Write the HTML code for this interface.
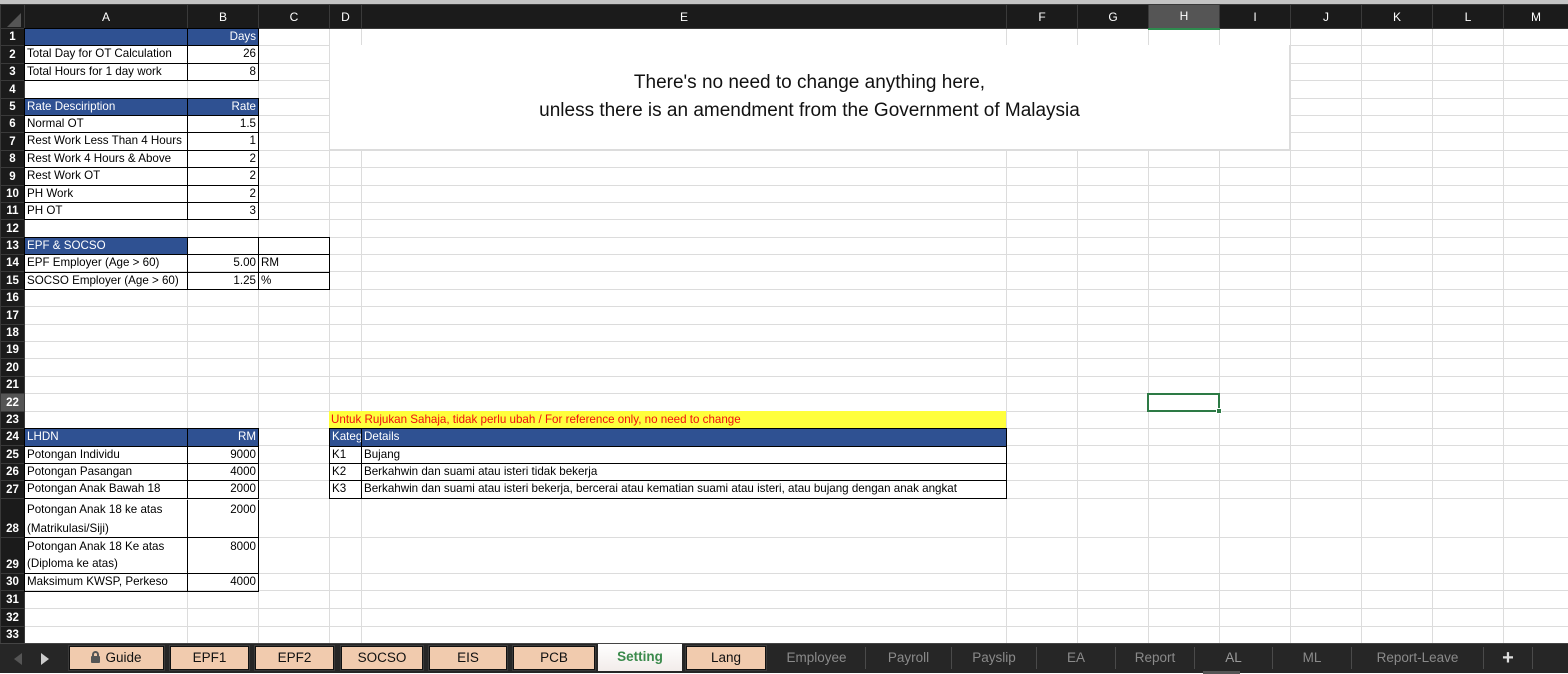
<!DOCTYPE html>
<html><head><meta charset="utf-8">
<style>
*{box-sizing:border-box;margin:0;padding:0}
body{width:1568px;height:673px;overflow:hidden;background:#fff;font-family:"Liberation Sans",Arial,sans-serif;position:relative}
#top{position:absolute;left:0;top:0;width:1568px;height:4px;background:#c4c4c4}
table.g{position:absolute;left:0;top:4px;border-collapse:collapse;table-layout:fixed;width:1568px}
table.g td{border:1px solid #dcdcdc;padding:0;font-size:12px}
table.g tr.hd td{background:#1b1b1b;color:#fff;text-align:center;border-color:#3a3a3a;height:24px;font-size:12px}
table.g td.rh{background:#1b1b1b;color:#fff;font-weight:bold;text-align:center;border-color:#3a3a3a;vertical-align:bottom;font-size:11.5px;line-height:15px}
table.g tr{height:17.4px}
.blk{position:absolute;border-left:1px solid #000;border-top:1px solid #000;font-size:11.6px;color:#000}
.r{display:flex;border-bottom:1px solid #000;height:17.4px;line-height:16px}
.r>span{border-right:1px solid #000;padding:0 2px;white-space:nowrap;overflow:hidden;flex:none}
.h{background:#2f5192;color:#fff}
.n{text-align:right}
.a{width:163px}.b{width:71px}.c{width:71px}
</style></head><body>
<div id="top"></div>
<table class="g">
<colgroup><col style="width:24px"><col style="width:163px"><col style="width:71px"><col style="width:71px"><col style="width:32px"><col style="width:645px"><col style="width:71px"><col style="width:71px"><col style="width:71px"><col style="width:71px"><col style="width:71px"><col style="width:71px"><col style="width:71px"><col style="width:65px"></colgroup>
<tr class="hd"><td style="background:#1b1b1b"><div style="width:0;height:0;border-left:14px solid transparent;border-bottom:14px solid #555;margin:6px 0 0 6px"></div></td><td>A</td><td>B</td><td>C</td><td>D</td><td>E</td><td>F</td><td>G</td><td style="background:#555;border-bottom:2px solid #2e8b4e">H</td><td>I</td><td>J</td><td>K</td><td>L</td><td>M</td></tr>
<tr><td class="rh">1</td><td></td><td></td><td></td><td></td><td></td><td></td><td></td><td></td><td></td><td></td><td></td><td></td><td></td></tr>
<tr><td class="rh">2</td><td></td><td></td><td></td><td></td><td></td><td></td><td></td><td></td><td></td><td></td><td></td><td></td><td></td></tr>
<tr><td class="rh">3</td><td></td><td></td><td></td><td></td><td></td><td></td><td></td><td></td><td></td><td></td><td></td><td></td><td></td></tr>
<tr><td class="rh">4</td><td></td><td></td><td></td><td></td><td></td><td></td><td></td><td></td><td></td><td></td><td></td><td></td><td></td></tr>
<tr><td class="rh">5</td><td></td><td></td><td></td><td></td><td></td><td></td><td></td><td></td><td></td><td></td><td></td><td></td><td></td></tr>
<tr><td class="rh">6</td><td></td><td></td><td></td><td></td><td></td><td></td><td></td><td></td><td></td><td></td><td></td><td></td><td></td></tr>
<tr><td class="rh">7</td><td></td><td></td><td></td><td></td><td></td><td></td><td></td><td></td><td></td><td></td><td></td><td></td><td></td></tr>
<tr><td class="rh">8</td><td></td><td></td><td></td><td></td><td></td><td></td><td></td><td></td><td></td><td></td><td></td><td></td><td></td></tr>
<tr><td class="rh">9</td><td></td><td></td><td></td><td></td><td></td><td></td><td></td><td></td><td></td><td></td><td></td><td></td><td></td></tr>
<tr><td class="rh">10</td><td></td><td></td><td></td><td></td><td></td><td></td><td></td><td></td><td></td><td></td><td></td><td></td><td></td></tr>
<tr><td class="rh">11</td><td></td><td></td><td></td><td></td><td></td><td></td><td></td><td></td><td></td><td></td><td></td><td></td><td></td></tr>
<tr><td class="rh">12</td><td></td><td></td><td></td><td></td><td></td><td></td><td></td><td></td><td></td><td></td><td></td><td></td><td></td></tr>
<tr><td class="rh">13</td><td></td><td></td><td></td><td></td><td></td><td></td><td></td><td></td><td></td><td></td><td></td><td></td><td></td></tr>
<tr><td class="rh">14</td><td></td><td></td><td></td><td></td><td></td><td></td><td></td><td></td><td></td><td></td><td></td><td></td><td></td></tr>
<tr><td class="rh">15</td><td></td><td></td><td></td><td></td><td></td><td></td><td></td><td></td><td></td><td></td><td></td><td></td><td></td></tr>
<tr><td class="rh">16</td><td></td><td></td><td></td><td></td><td></td><td></td><td></td><td></td><td></td><td></td><td></td><td></td><td></td></tr>
<tr><td class="rh">17</td><td></td><td></td><td></td><td></td><td></td><td></td><td></td><td></td><td></td><td></td><td></td><td></td><td></td></tr>
<tr><td class="rh">18</td><td></td><td></td><td></td><td></td><td></td><td></td><td></td><td></td><td></td><td></td><td></td><td></td><td></td></tr>
<tr><td class="rh">19</td><td></td><td></td><td></td><td></td><td></td><td></td><td></td><td></td><td></td><td></td><td></td><td></td><td></td></tr>
<tr><td class="rh">20</td><td></td><td></td><td></td><td></td><td></td><td></td><td></td><td></td><td></td><td></td><td></td><td></td><td></td></tr>
<tr><td class="rh">21</td><td></td><td></td><td></td><td></td><td></td><td></td><td></td><td></td><td></td><td></td><td></td><td></td><td></td></tr>
<tr><td class="rh" style="background:#555">22</td><td></td><td></td><td></td><td></td><td></td><td></td><td></td><td></td><td></td><td></td><td></td><td></td><td></td></tr>
<tr><td class="rh">23</td><td></td><td></td><td></td><td></td><td></td><td></td><td></td><td></td><td></td><td></td><td></td><td></td><td></td></tr>
<tr><td class="rh">24</td><td></td><td></td><td></td><td></td><td></td><td></td><td></td><td></td><td></td><td></td><td></td><td></td><td></td></tr>
<tr><td class="rh">25</td><td></td><td></td><td></td><td></td><td></td><td></td><td></td><td></td><td></td><td></td><td></td><td></td><td></td></tr>
<tr><td class="rh">26</td><td></td><td></td><td></td><td></td><td></td><td></td><td></td><td></td><td></td><td></td><td></td><td></td><td></td></tr>
<tr><td class="rh">27</td><td></td><td></td><td></td><td></td><td></td><td></td><td></td><td></td><td></td><td></td><td></td><td></td><td></td></tr>
<tr style="height:39.2px"><td class="rh">28</td><td></td><td></td><td></td><td></td><td></td><td></td><td></td><td></td><td></td><td></td><td></td><td></td><td></td></tr>
<tr style="height:36px"><td class="rh">29</td><td></td><td></td><td></td><td></td><td></td><td></td><td></td><td></td><td></td><td></td><td></td><td></td><td></td></tr>
<tr style="height:17.6px"><td class="rh">30</td><td></td><td></td><td></td><td></td><td></td><td></td><td></td><td></td><td></td><td></td><td></td><td></td><td></td></tr>
<tr style="height:17.6px"><td class="rh">31</td><td></td><td></td><td></td><td></td><td></td><td></td><td></td><td></td><td></td><td></td><td></td><td></td><td></td></tr>
<tr style="height:17.6px"><td class="rh">32</td><td></td><td></td><td></td><td></td><td></td><td></td><td></td><td></td><td></td><td></td><td></td><td></td><td></td></tr>
<tr style="height:17.6px"><td class="rh">33</td><td></td><td></td><td></td><td></td><td></td><td></td><td></td><td></td><td></td><td></td><td></td><td></td><td></td></tr>
</table>

<!-- merged notice box -->
<div style="position:absolute;left:330px;top:45px;width:960px;height:105px;background:#fff;text-align:center;font-size:19px;line-height:28px;color:#111;border-right:1px solid #dcdcdc;border-bottom:1px solid #dcdcdc">
<div style="position:absolute;left:0;top:24px;width:100%">There's no need to change anything here,<br>unless there is an amendment from the Government of Malaysia</div></div>

<div class="blk" style="left:24px;top:28px">
<div class="r h"><span class="a"></span><span class="b n">Days</span></div>
<div class="r"><span class="a">Total Day for OT Calculation</span><span class="b n">26</span></div>
<div class="r"><span class="a">Total Hours for 1 day work</span><span class="b n">8</span></div>
</div>

<div class="blk" style="left:24px;top:97.6px">
<div class="r h"><span class="a">Rate Desciription</span><span class="b n">Rate</span></div>
<div class="r"><span class="a">Normal OT</span><span class="b n">1.5</span></div>
<div class="r"><span class="a">Rest Work Less Than 4 Hours</span><span class="b n">1</span></div>
<div class="r"><span class="a">Rest Work 4 Hours &amp; Above</span><span class="b n">2</span></div>
<div class="r"><span class="a">Rest Work OT</span><span class="b n">2</span></div>
<div class="r"><span class="a">PH Work</span><span class="b n">2</span></div>
<div class="r"><span class="a">PH OT</span><span class="b n">3</span></div>
</div>

<div class="blk" style="left:24px;top:236.8px">
<div class="r"><span class="a h">EPF &amp; SOCSO</span><span class="b"></span><span class="c"></span></div>
<div class="r"><span class="a">EPF Employer (Age &gt; 60)</span><span class="b n">5.00</span><span class="c">RM</span></div>
<div class="r"><span class="a">SOCSO Employer (Age &gt; 60)</span><span class="b n">1.25</span><span class="c">%</span></div>
</div>

<div style="position:absolute;left:329px;top:411px;width:677px;height:17.4px;background:#ffff3c;color:#ee1010;font-size:11.6px;line-height:17px;padding-left:2px;white-space:nowrap">Untuk Rujukan Sahaja, tidak perlu ubah / For reference only, no need to change</div>

<div class="blk" style="left:24px;top:428.2px">
<div class="r h"><span class="a">LHDN</span><span class="b n">RM</span></div>
<div class="r"><span class="a">Potongan Individu</span><span class="b n">9000</span></div>
<div class="r"><span class="a">Potongan Pasangan</span><span class="b n">4000</span></div>
<div class="r"><span class="a">Potongan Anak Bawah 18</span><span class="b n">2000</span></div>
<div class="r" style="height:39.2px;line-height:19px;padding-top:1px"><span class="a" style="white-space:normal">Potongan Anak 18 ke atas<br>(Matrikulasi/Siji)</span><span class="b n">2000</span></div>
<div class="r" style="height:36px;line-height:17.5px"><span class="a" style="white-space:normal">Potongan Anak 18 Ke atas<br>(Diploma ke atas)</span><span class="b n">8000</span></div>
<div class="r" style="height:18px"><span class="a">Maksimum KWSP, Perkeso</span><span class="b n">4000</span></div>
</div>

<div class="blk" style="left:329px;top:428.2px">
<div class="r h"><span style="width:32px">Kateg</span><span style="width:645px">Details</span></div>
<div class="r"><span style="width:32px">K1</span><span style="width:645px">Bujang</span></div>
<div class="r"><span style="width:32px">K2</span><span style="width:645px">Berkahwin dan suami atau isteri tidak bekerja</span></div>
<div class="r"><span style="width:32px">K3</span><span style="width:645px">Berkahwin dan suami atau isteri bekerja, bercerai atau kematian suami atau isteri, atau bujang dengan anak angkat</span></div>
</div>

<!-- selected cell -->
<div style="position:absolute;left:1147px;top:392.5px;width:73px;height:19.5px;border:2px solid #2d7a45"></div>
<div style="position:absolute;left:1216px;top:408px;width:6px;height:6px;background:#2d7a45;border:1px solid #fff"></div>

<!-- tab bar -->
<div style="position:absolute;left:0;top:643px;width:1568px;height:30px;background:#262626;border-top:1px solid #444;font-family:'Liberation Sans',Arial,sans-serif;font-size:13.5px">
<div style="position:absolute;left:14px;top:9px;width:0;height:0;border-top:6px solid transparent;border-bottom:6px solid transparent;border-right:8px solid #555"></div>
<div style="position:absolute;left:41px;top:9px;width:0;height:0;border-top:6px solid transparent;border-bottom:6px solid transparent;border-left:8px solid #ccc"></div>
<style>
.t{position:absolute;top:2px;height:24px;line-height:22px;text-align:center;color:#111;background:#f1cbae;border:1px solid #111;box-shadow:0 0 0 1px #3a3a3a}
.u{position:absolute;top:3px;height:22px;line-height:22px;text-align:center;color:#8a8a8a;border-right:1px solid #4a4a4a}
</style>
<div class="t" style="left:69px;width:95px"><span style="display:inline-block;width:9px;height:7px;background:#555;border-radius:1px;position:relative;margin-right:5px;vertical-align:-1px"><span style="position:absolute;left:1px;top:-5px;width:7px;height:7px;border:2px solid #555;border-bottom:none;border-radius:4px 4px 0 0;box-sizing:border-box"></span></span>Guide</div>
<div class="t" style="left:170px;width:79px">EPF1</div>
<div class="t" style="left:255px;width:79px">EPF2</div>
<div class="t" style="left:341px;width:82px">SOCSO</div>
<div class="t" style="left:429px;width:78px">EIS</div>
<div class="t" style="left:513px;width:82px">PCB</div>
<div style="position:absolute;left:598px;top:0;width:84px;height:27px;line-height:26px;text-align:center;background:linear-gradient(#fff,#f2ecea);color:#3b8a4c;font-weight:bold">Setting</div>
<div class="t" style="left:686px;width:80px">Lang</div>
<div class="u" style="left:768px;width:98px">Employee</div>
<div class="u" style="left:866px;width:86px">Payroll</div>
<div class="u" style="left:952px;width:85px">Payslip</div>
<div class="u" style="left:1037px;width:79px">EA</div>
<div class="u" style="left:1116px;width:79px">Report</div>
<div class="u" style="left:1195px;width:78px;color:#9a9a9a">AL</div>
<div class="u" style="left:1273px;width:79px">ML</div>
<div class="u" style="left:1352px;width:132px;white-space:nowrap;overflow:hidden">Report-Leave</div>
<div class="u" style="left:1484px;width:49px;color:#ddd;font-size:20px;font-weight:bold">+</div>
<div style="position:absolute;left:1203px;top:27px;width:37px;height:3px;background:#555"></div>
</div>
</body></html>
